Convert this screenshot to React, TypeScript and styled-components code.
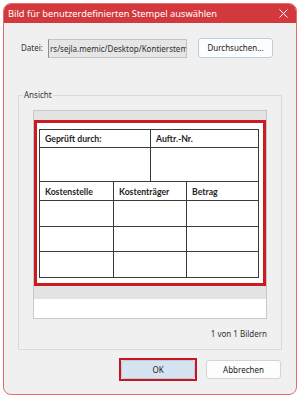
import React from "react";
import styled, { createGlobalStyle } from "styled-components";

const GlobalStyle = createGlobalStyle`
  html, body {
    margin: 0;
    padding: 0;
    background: #ffffff;
  }
  body {
    font-family: "Noto Sans", "Open Sans", sans-serif;
  }
  * {
    box-sizing: border-box;
  }
`;

const Window = styled.div`
  margin: 3px 0 0 3px;
  width: 294px;
  height: 392px;
  border: 1px solid #e46a6c;
  border-radius: 8px;
  background: #f0f0f0;
  overflow: hidden;
  display: flex;
  flex-direction: column;
`;

const TitleBar = styled.div`
  height: 19px;
  flex: none;
  background: #d3383d;
  color: #ffffff;
  display: flex;
  align-items: center;
  justify-content: space-between;
  padding: 0 8px 0 4px;
  font-size: 9.3px;
  line-height: 13px;
`;

const CloseIcon = () => (
  <svg width="9" height="9" viewBox="0 0 9 9">
    <path d="M0.5 0.5 L8.5 8.5 M8.5 0.5 L0.5 8.5" stroke="#ffffff" strokeWidth="1" fill="none" />
  </svg>
);

const Content = styled.div`
  display: flex;
  flex-direction: column;
  padding-top: 15px;
  font-size: 8px;
  color: #1a1a1a;
`;

const FileRow = styled.div`
  display: flex;
  align-items: center;
  padding-left: 16px;
  height: 20px;
`;

const Label = styled.span`
  width: 28px;
  padding-left: 1px;
  line-height: 12px;
  color: #333333;
`;

const PathField = styled.div`
  width: 139px;
  height: 19px;
  background: #e6e6e6;
  border: 1px solid #c4c4c4;
  border-left-color: #8e8e8e;
  overflow: hidden;
  white-space: nowrap;
  padding: 2px 0 0 1px;
  line-height: 13px;
  font-size: 8px;
  color: #303030;
`;

const Button = styled.button<{ $primary?: boolean }>`
  width: 75px;
  height: 19px;
  padding: 0;
  font-family: inherit;
  font-size: 8px;
  line-height: 12px;
  color: #1a1a1a;
  border-radius: 3px;
  background: ${(p) => (p.$primary ? "#d6e4f1" : "#fdfdfd")};
  border: 1px solid ${(p) => (p.$primary ? "#b7cde3" : "#d3d3d3")};
`;

const BrowseButton = styled(Button)`
  margin-left: 11px;
  height: 20px;
  border-color: #b9cfe2;
`;

const FocusRing = styled.span`
  display: flex;
  border: 2px solid #c8161e;
  margin: -2px 0;
`;

const Group = styled.fieldset`
  margin: 30px 15px 0 14px;
  padding: 8px 14px 8px 14px;
  border: 1px solid #dadada;
  display: flex;
  flex-direction: column;
`;

const Legend = styled.legend`
  margin-left: -10px;
  padding: 0 1px;
  font-size: 8px;
  line-height: 14px;
  color: #333333;
`;

const Preview = styled.div`
  height: 209px;
  border: 1px solid #c8c8c8;
  background: #ffffff;
  display: flex;
  flex-direction: column;
`;

const Strip = styled.div<{ $h: number }>`
  height: ${(p) => p.$h}px;
  flex: none;
  background: #e3e3e3;
`;

const StampFrame = styled.div`
  height: 166px;
  flex: none;
  border: 3px solid #cc1a22;
  background: #ffffff;
  padding: 6px 4px 0 2px;
`;

const Grid = styled.div<{ $cols: string; $rows: string; $first?: boolean }>`
  display: grid;
  grid-template-columns: ${(p) => p.$cols};
  grid-template-rows: ${(p) => p.$rows};
  border-left: 1px solid #3a3a3a;
  border-top: ${(p) => (p.$first ? "1px solid #3a3a3a" : "none")};
`;

const Cell = styled.div`
  border-right: 1px solid #3a3a3a;
  border-bottom: 1px solid #3a3a3a;
  font-family: Lato, "Open Sans", sans-serif;
  font-weight: 700;
  font-size: 8.7px;
  color: #1e1e1e;
  padding-left: 5px;
  display: flex;
  align-items: center;
`;

const Counter = styled.div`
  margin-top: 8px;
  text-align: right;
  line-height: 14px;
  color: #333333;
`;

const ButtonRow = styled.div`
  display: flex;
  justify-content: flex-end;
  align-items: center;
  gap: 9px;
  padding-right: 15px;
  margin-top: 10px;
`;

const App: React.FC = () => {
  return (
    <>
      <GlobalStyle />
      <Window>
        <TitleBar>
          <span>Bild für benutzerdefinierten Stempel auswählen</span>
          <CloseIcon />
        </TitleBar>
        <Content>
          <FileRow>
            <Label>Datei:</Label>
            <PathField>rs/sejla.memic/Desktop/Kontierstemp</PathField>
            <BrowseButton>Durchsuchen...</BrowseButton>
          </FileRow>
          <Group>
            <Legend>Ansicht</Legend>
            <Preview>
              <Strip $h={9} />
              <StampFrame>
                <Grid $first $cols="111px 108px" $rows="18px 34px">
                  <Cell>Geprüft durch:</Cell>
                  <Cell>Auftr.-Nr.</Cell>
                  <Cell />
                  <Cell />
                </Grid>
                <Grid $cols="74px 73px 72px" $rows="19px 26px 25px 26px">
                  <Cell>Kostenstelle</Cell>
                  <Cell>Kostenträger</Cell>
                  <Cell>Betrag</Cell>
                  {Array.from({ length: 9 }).map((_, i) => (
                    <Cell key={i} />
                  ))}
                </Grid>
              </StampFrame>
              <Strip $h={13} />
            </Preview>
            <Counter>1 von 1 Bildern</Counter>
          </Group>
          <ButtonRow>
            <FocusRing>
              <Button $primary style={{ width: 74 }}>OK</Button>
            </FocusRing>
            <Button>Abbrechen</Button>
          </ButtonRow>
        </Content>
      </Window>
    </>
  );
};

export default App;
